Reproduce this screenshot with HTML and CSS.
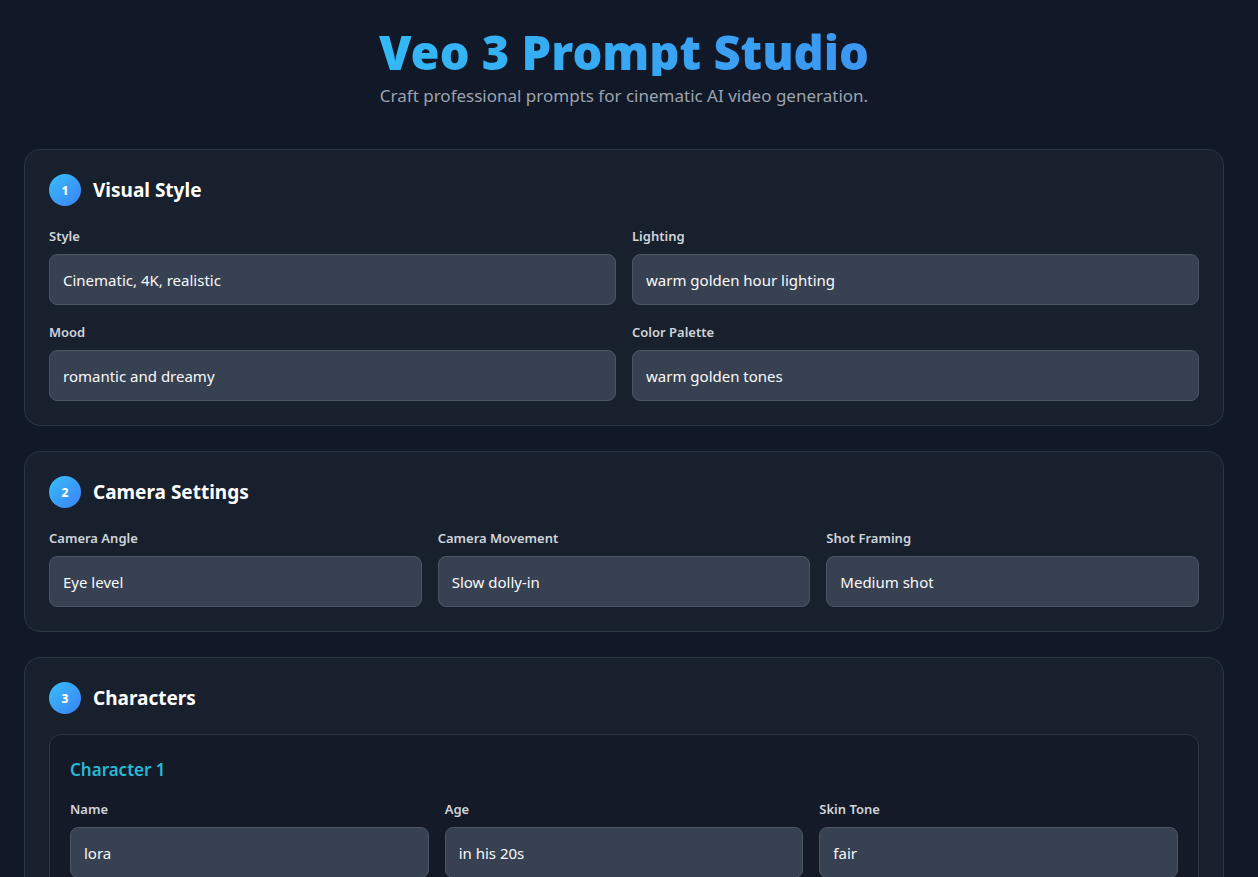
FILE: index.html
```html
<!DOCTYPE html>
<html lang="en">
<head>
<meta charset="utf-8">
<title>Veo 3 Prompt Studio</title>
<link rel="stylesheet" href="styles.css">
</head>
<body>
<div class="page">
  <header class="hero">
    <h1 class="title">Veo 3 Prompt Studio</h1>
    <p class="subtitle">Craft professional prompts for cinematic AI video generation.</p>
  </header>

  <section class="card">
    <div class="card-head"><span class="badge">1</span><h2>Visual Style</h2></div>
    <div class="grid cols-2">
      <label class="field"><span class="label">Style</span><input class="input" value="Cinematic, 4K, realistic"></label>
      <label class="field"><span class="label">Lighting</span><input class="input" value="warm golden hour lighting"></label>
      <label class="field"><span class="label">Mood</span><input class="input" value="romantic and dreamy"></label>
      <label class="field"><span class="label">Color Palette</span><input class="input" value="warm golden tones"></label>
    </div>
  </section>

  <section class="card">
    <div class="card-head"><span class="badge">2</span><h2>Camera Settings</h2></div>
    <div class="grid cols-3">
      <label class="field"><span class="label">Camera Angle</span><input class="input" value="Eye level"></label>
      <label class="field"><span class="label">Camera Movement</span><input class="input" value="Slow dolly-in"></label>
      <label class="field"><span class="label">Shot Framing</span><input class="input" value="Medium shot"></label>
    </div>
  </section>

  <section class="card">
    <div class="card-head"><span class="badge">3</span><h2>Characters</h2></div>
    <div class="subcard">
      <h3 class="sub-title">Character 1</h3>
      <div class="grid cols-3">
        <label class="field"><span class="label">Name</span><input class="input" value="lora"></label>
        <label class="field"><span class="label">Age</span><input class="input" value="in his 20s"></label>
        <label class="field"><span class="label">Skin Tone</span><input class="input" value="fair"></label>
      </div>
    </div>
  </section>
</div>
</body>
</html>
```
FILE: styles.css
```css
* { box-sizing: border-box; }
html, body { margin: 0; padding: 0; }
body {
  background: #111827;
  color: #f3f4f6;
  font-family: "Noto Sans", "Open Sans", "Liberation Sans", sans-serif;
  min-height: 100vh;
}
.page {
  width: 1200px;
  margin-left: 24px;
  padding-top: 28px;
  padding-bottom: 40px;
}
.hero {
  text-align: center;
  margin-bottom: 39px;
}
.title {
  display: inline-block;
  margin: 0;
  font-size: 47px;
  line-height: 48px;
  font-weight: 900;
  background: linear-gradient(to right, #33b9f4, #3c96f2);
  -webkit-background-clip: text;
  background-clip: text;
  color: transparent;
}
.subtitle {
  margin: 6px 0 0;
  font-size: 17px;
  line-height: 28px;
  color: #9ca3af;
}
.card {
  background: #18202e;
  border: 1px solid #2c3545;
  border-radius: 16px;
  padding: 24px;
  margin-bottom: 25px;
}
.card-head {
  display: flex;
  align-items: center;
  gap: 12px;
  margin-bottom: 20px;
}
.card-head h2 {
  margin: 0;
  font-size: 19px;
  line-height: 28px;
  font-weight: 700;
  color: #ffffff;
}
.badge {
  width: 32px;
  height: 32px;
  border-radius: 50%;
  background: linear-gradient(135deg, #38bdf8, #3b82f6);
  color: #fff;
  font-size: 12px;
  font-weight: 800;
  display: flex;
  align-items: center;
  justify-content: center;
}
.grid {
  display: grid;
  column-gap: 16px;
  row-gap: 17px;
}
.cols-2 { grid-template-columns: 1fr 1fr; }
.cols-3 { grid-template-columns: 1fr 1fr 1fr; }
.field { display: flex; flex-direction: column; }
.label {
  font-size: 13px;
  line-height: 20px;
  font-weight: 600;
  color: #d1d5db;
  margin-bottom: 8px;
}
.input {
  height: 51px;
  width: 100%;
  background: #374151;
  border: 1px solid #4b5563;
  border-radius: 8px;
  padding: 0 13px;
  color: #f9fafb;
  font-family: inherit;
  font-size: 15px;
  outline: none;
}
.subcard {
  background: #141a27;
  border: 1px solid #2c3545;
  border-radius: 12px;
  padding: 20px;
}
.sub-title {
  margin: 1px 0 15px;
  font-size: 17px;
  line-height: 28px;
  font-weight: 600;
  color: #26b9d6;
}
```
